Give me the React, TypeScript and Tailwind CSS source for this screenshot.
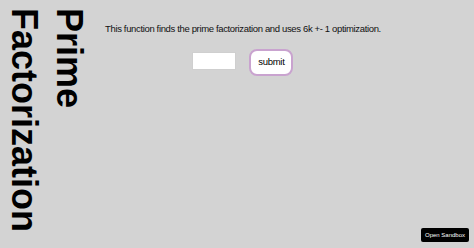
import React, { useState } from 'react';

const App: React.FC = () => {
  const [value, setValue] = useState('');

  return (
    <div className="relative w-[474px] h-[248px] bg-[#d3d3d3] overflow-hidden flex" style={{ fontFamily: '"Liberation Sans", Arial, sans-serif' }}>
      {/* vertical title */}
      <div className="pl-[2px] pt-[8px]">
        <h1 className="[writing-mode:vertical-rl] text-[36px] leading-[45px] font-bold text-black">
          Prime Factorization
        </h1>
      </div>

      <div className="flex flex-col items-center pl-[13px] pt-[22px]">
        <p className="text-[9.5px] leading-[13px] tracking-[-0.35px] text-[#111]">
          This function finds the prime factorization and uses 6k +- 1 optimization.
        </p>
        <div className="flex items-start gap-[13px] mt-[14px]">
          <input
            type="text"
            value={value}
            onChange={e => setValue(e.target.value)}
            className="mt-[3px] w-[44px] h-[18px] bg-white border border-[#cfcfcf] outline-none text-[10px]"
          />
          <button className="w-[44px] h-[27px] bg-white rounded-[8px] border-[2px] border-[#c9a3cf] text-[9.5px] tracking-[-0.3px] text-black">
            submit
          </button>
        </div>
      </div>

      <button className="absolute right-[5px] bottom-[6px] w-[48px] h-[14px] bg-black rounded-[2px] text-white text-[6px] leading-[14px]">
        Open Sandbox
      </button>
    </div>
  );
};

export default App;
